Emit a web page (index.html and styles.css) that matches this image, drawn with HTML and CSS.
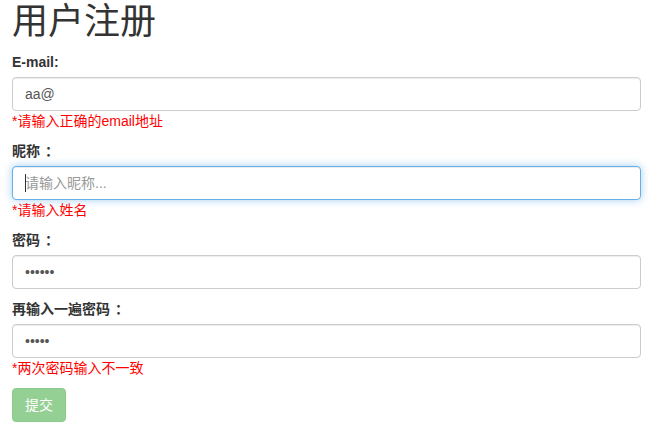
FILE: index.html
```html
<!DOCTYPE html>
<html lang="zh-CN">
<head>
<meta charset="utf-8">
<title>用户注册</title>
<link rel="stylesheet" href="styles.css">
</head>
<body>
<div class="page">
  <h1 class="title">用户注册</h1>
  <form class="form">
    <div class="form-group">
      <label class="label" for="email">E-mail:</label>
      <input class="input" id="email" type="text" value="aa@">
      <span class="error">*请输入正确的email地址</span>
    </div>
    <div class="form-group">
      <label class="label" for="nick">昵称<span class="colon">：</span></label>
      <div class="field">
        <input class="input input-focus" id="nick" type="text" placeholder="请输入昵称...">
        <span class="caret"></span>
      </div>
      <span class="error">*请输入姓名</span>
    </div>
    <div class="form-group">
      <label class="label" for="pwd">密码<span class="colon">：</span></label>
      <input class="input" id="pwd" type="password" value="123456">
    </div>
    <div class="form-group">
      <label class="label" for="pwd2">再输入一遍密码<span class="colon">：</span></label>
      <input class="input" id="pwd2" type="password" value="12345">
      <span class="error">*两次密码输入不一致</span>
    </div>
    <button class="btn" type="button" disabled>提交</button>
  </form>
</div>
</body>
</html>
```
FILE: styles.css
```css
* { box-sizing: border-box; }
html, body {
  margin: 0;
  padding: 0;
  background: #fff;
}
body {
  font-family: "Liberation Sans", "Noto Sans CJK SC", sans-serif;
  font-size: 14px;
  line-height: 20px;
  color: #333;
}
.page {
  width: 641px;
  padding: 0 0 0 12px;
}
.title {
  margin: 2px 0 10px;
  font-size: 36px;
  font-weight: 400;
  line-height: 1.1;
  color: #333;
}
.form { margin: 0; }
.form-group {
  margin-bottom: 10px;
}
.label {
  display: block;
  height: 20px;
  margin-bottom: 5px;
  font-weight: bold;
}
.colon {
  padding-left: 5px;
}
.field {
  position: relative;
}
.caret {
  position: absolute;
  left: 13px;
  top: 8px;
  width: 1px;
  height: 18px;
  background: #333;
}
.input {
  display: block;
  width: 100%;
  height: 34px;
  padding: 6px 12px;
  font-family: inherit;
  font-size: 14px;
  line-height: 20px;
  color: #555;
  background: #fff;
  border: 1px solid #ccc;
  border-radius: 4px;
  box-shadow: inset 0 1px 1px rgba(0,0,0,.075);
  outline: none;
}
.input::placeholder { color: #999; }
.input-focus {
  border-color: #66afe9;
  box-shadow: inset 0 1px 1px rgba(0,0,0,.075), 0 0 8px rgba(102,175,233,.6);
}
.error {
  display: block;
  color: #f00;
}
.btn {
  display: block;
  height: 34px;
  padding: 6px 12px;
  font-family: inherit;
  font-size: 14px;
  line-height: 20px;
  color: #fff;
  background: #5cb85c;
  border: 1px solid #4cae4c;
  border-radius: 4px;
  opacity: .65;
  cursor: not-allowed;
}
```
